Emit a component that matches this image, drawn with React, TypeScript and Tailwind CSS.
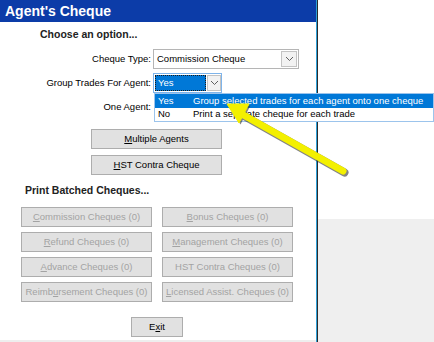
import React from "react";

const font = { fontFamily: '"Liberation Sans", Arial, sans-serif' };

function Btn({ pre, u, post, disabled, w }: { pre?: string; u: string; post: string; disabled?: boolean; w?: string }) {
  return (
    <div
      className={`h-[20px] ${w ?? "w-[131px]"} flex items-center justify-center border border-[#adadad] bg-[#e1e1e1] text-[9.5px] ${disabled ? "text-[#a3a3a3]" : "text-black"}`}
    >
      <span className="whitespace-nowrap">
        {pre}
        <span className="underline underline-offset-1">{u}</span>
        {post}
      </span>
    </div>
  );
}

function Chevron() {
  return (
    <svg width="9" height="6" viewBox="0 0 9 6">
      <path d="M1 1 L4.5 4.5 L8 1" fill="none" stroke="#606060" strokeWidth="1" />
    </svg>
  );
}

export default function App() {
  return (
    <div className="relative w-[434px] h-[342px] flex bg-white overflow-hidden" style={font}>
      {/* left panel */}
      <div className="w-[316px] h-full flex flex-col">
        <div className="h-[22px] bg-[#0c3ca8] flex items-center pl-[5px]">
          <span className="text-white font-bold text-[14px] leading-none">Agent's Cheque</span>
        </div>
        <div className="flex-1 flex flex-col bg-white">
          <div className="mt-[6px] pl-[40px] text-[10.5px] font-bold leading-[13px] text-[#222]">Choose an option...</div>

          <div className="mt-[8px] flex items-center h-[20px]">
            <div className="w-[152px] text-right text-[9.5px] pr-[1px]">Cheque Type:</div>
            <div className="ml-[1px] w-[146px] h-[20px] border border-[#b5b5b5] flex items-center">
              <span className="flex-1 text-[9.5px] pl-[3px]">Commission Cheque</span>
              <div className="w-[16px] h-[16px] mr-[1px] border border-[#c3c3c3] bg-[#f2f2f2] flex items-center justify-center">
                <Chevron />
              </div>
            </div>
          </div>

          <div className="mt-[4px] flex items-center h-[20px]">
            <div className="w-[152px] text-right text-[9.5px] pr-[1px]">Group Trades For Agent:</div>
            <div className="ml-[1px] w-[69px] h-[20px] border border-[#7eb4ea] flex items-center">
              <div className="ml-[1px] w-[51px] h-[16px] bg-[#0078d7] border border-dotted border-[#1a1a1a] text-white text-[9.5px] flex items-center pl-[2px]">
                Yes
              </div>
              <div className="ml-[1px] w-[14px] h-[16px] border border-[#c3c3c3] bg-[#f2f2f2] flex items-center justify-center">
                <Chevron />
              </div>
            </div>
          </div>

          <div className="mt-[4px] flex items-center h-[20px]">
            <div className="w-[152px] text-right text-[9.5px] pr-[1px]">One Agent:</div>
          </div>

          <div className="mt-[12px] ml-[91px] flex flex-col gap-[6px]">
            <Btn u="M" post="ultiple Agents" w="w-[131px]" />
            <Btn u="H" post="ST Contra Cheque" w="w-[131px]" />
          </div>

          <div className="mt-[9px] pl-[25px] text-[10.5px] font-bold leading-[13px] text-[#222]">Print Batched Cheques...</div>

          <div className="mt-[10px] ml-[21px] grid grid-cols-[131px_131px] gap-x-[10px] gap-y-[5px]">
            <Btn disabled u="C" post="ommission Cheques (0)" />
            <Btn disabled u="B" post="onus Cheques (0)" />
            <Btn disabled u="R" post="efund Cheques (0)" />
            <Btn disabled u="M" post="anagement Cheques (0)" />
            <Btn disabled u="A" post="dvance Cheques (0)" />
            <Btn disabled pre="HST Contra Cheques (0)" u="" post="" />
            <Btn disabled pre="Reimb" u="u" post="rsement Cheques (0)" />
            <Btn disabled u="L" post="icensed Assist. Cheques (0)" />
          </div>

          <div className="mt-[15px] ml-[131px]">
            <Btn pre="E" u="x" post="it" w="w-[52px]" />
          </div>
        </div>
        <div className="h-[2px] bg-[#eeeeee]" />
      </div>

      {/* divider */}
      <div className="w-[1px] h-full bg-[#2ea0d8]" />
      <div className="w-[1px] h-full bg-[#2b2b2b]" />

      {/* right panel */}
      <div className="flex-1 h-full flex flex-col">
        <div className="h-[219px] bg-white" />
        <div className="flex-1 bg-[#efefef]" />
      </div>

      {/* dropdown list */}
      <div className="absolute left-[154px] top-[93px] w-[280px] h-[29px] border border-[#9cc4ec] bg-white text-[9.5px] flex flex-col">
        <div className="h-[14px] bg-[#0078d7] text-white flex items-center">
          <span className="shrink-0 w-[38px] pl-[3px]">Yes</span>
          <span className="whitespace-nowrap">Group selected trades for each agent onto one cheque</span>
        </div>
        <div className="h-[13px] text-black flex items-center">
          <span className="shrink-0 w-[38px] pl-[3px]">No</span>
          <span className="whitespace-nowrap">Print a separate cheque for each trade</span>
        </div>
      </div>

      {/* arrow */}
      <svg className="absolute left-0 top-0 pointer-events-none" width="434" height="342" viewBox="0 0 434 342">
        <g transform="translate(1.5,1.5)" opacity="0.6">
          <line x1="240" y1="113" x2="343" y2="171" stroke="#333" strokeWidth="8" strokeLinecap="round" />
          <polygon points="227,104 239,123 249,104" fill="#333" />
        </g>
        <line x1="240" y1="113" x2="343" y2="171" stroke="#f3f000" strokeWidth="7" strokeLinecap="round" />
        <polygon points="227,104 239,123 249,104" fill="#f3f000" stroke="#f3f000" strokeWidth="1" strokeLinejoin="round" />
      </svg>
    </div>
  );
}
